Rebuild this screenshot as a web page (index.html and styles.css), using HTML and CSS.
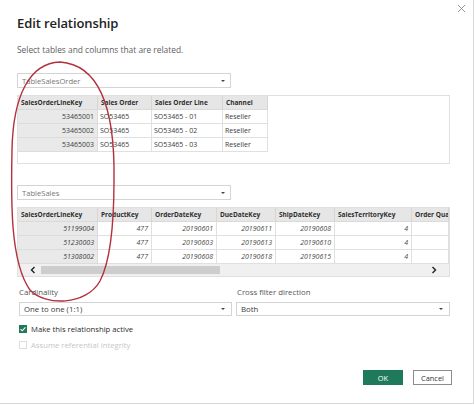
FILE: index.html
```html
<!DOCTYPE html>
<html>
<head>
<meta charset="utf-8">
<link rel="stylesheet" href="styles.css">
</head>
<body>
<div class="dialog">
  <svg class="close" width="9" height="9" viewBox="0 0 9 9"><path d="M1 1L8 8M8 1L1 8" stroke="#8a8a8a" stroke-width="0.9" fill="none"/></svg>
  <h1 class="title">Edit relationship</h1>
  <p class="subtitle">Select tables and columns that are related.</p>

  <div class="select s1"><span>TableSalesOrder</span><i class="caret"></i></div>
  <div class="tbl t1">
    <div class="grid g1">
      <div class="h">SalesOrderLineKey</div><div class="h">Sales Order</div><div class="h">Sales Order Line</div><div class="h">Channel</div>
      <div class="k">53465001</div><div class="d">SO53465</div><div class="d">SO53465 - 01</div><div class="d">Reseller</div>
      <div class="k">53465002</div><div class="d">SO53465</div><div class="d">SO53465 - 02</div><div class="d">Reseller</div>
      <div class="k">53465003</div><div class="d">SO53465</div><div class="d">SO53465 - 03</div><div class="d">Reseller</div>
    </div>
  </div>

  <div class="select s2"><span>TableSales</span><i class="caret"></i></div>
  <div class="tbl t2">
    <div class="grid g2">
      <div class="h">SalesOrderLineKey</div><div class="h">ProductKey</div><div class="h">OrderDateKey</div><div class="h">DueDateKey</div><div class="h">ShipDateKey</div><div class="h">SalesTerritoryKey</div><div class="h last">Order Qua</div>
      <div class="k i">51199004</div><div class="n">477</div><div class="n">20190601</div><div class="n">20190611</div><div class="n">20190608</div><div class="n">4</div><div class="n"></div>
      <div class="k i">51230003</div><div class="n">477</div><div class="n">20190603</div><div class="n">20190613</div><div class="n">20190610</div><div class="n">4</div><div class="n"></div>
      <div class="k i">51308002</div><div class="n">477</div><div class="n">20190608</div><div class="n">20190618</div><div class="n">20190615</div><div class="n">4</div><div class="n"></div>
      <div class="scroll">
        <svg class="chev" width="6" height="8" viewBox="0 0 6 8"><path d="M4.5 1L1.5 4L4.5 7" stroke="#222" stroke-width="1.4" fill="none"/></svg>
        <div class="thumb"></div>
        <svg class="chev right" width="6" height="8" viewBox="0 0 6 8"><path d="M1.5 1L4.5 4L1.5 7" stroke="#222" stroke-width="1.4" fill="none"/></svg>
      </div>
    </div>
  </div>

  <div class="cols">
    <div class="col">
      <div class="label">Cardinality</div>
      <div class="select s3"><span>One to one (1:1)</span><i class="caret"></i></div>
    </div>
    <div class="col">
      <div class="label">Cross filter direction</div>
      <div class="select s3"><span>Both</span><i class="caret"></i></div>
    </div>
  </div>

  <div class="check on"><span class="box"><svg width="8" height="8" viewBox="0 0 8 8"><path d="M1.6 4.2L3.2 5.8L6.4 2.3" stroke="#fff" stroke-width="1.1" fill="none"/></svg></span><span>Make this relationship active</span></div>
  <div class="check off"><span class="box"></span><span>Assume referential integrity</span></div>

  <div class="buttons">
    <div class="btn ok">OK</div>
    <div class="btn cancel">Cancel</div>
  </div>

  <svg class="annot" width="474" height="405" viewBox="0 0 474 405">
    <path d="M60 62 C30 63 13 95 12 150 C11 200 10 262 30 290 C45 306 86 306 100 281 C110 262 114 230 114 180 C115 120 104 65 60 62 Z" stroke="#b3303d" stroke-width="1.4" fill="none"/>
  </svg>
</div>
</body>
</html>
```

FILE: styles.css
```css
* { box-sizing: border-box; }
body {
  margin: 0;
  background: #fff;
  font-family: "Open Sans", "Noto Sans", sans-serif;
  color: #333;
}
.dialog {
  position: relative;
  width: 474px;
  height: 404px;
  border-right: 1px solid #d6d6d6;
  border-bottom: 1px solid #d6d6d6;
  padding: 13px 0 0 17px;
}
.close {
  position: absolute;
  top: 4px;
  left: 457px;
}
.title {
  margin: 0;
  font-size: 13px;
  font-weight: 600;
  line-height: 20px;
  height: 20px;
  color: #222;
  letter-spacing: -0.1px;
}
.subtitle {
  margin: 10px 0 0;
  font-size: 8.4px;
  line-height: 14px;
  height: 14px;
  color: #5e5e5e;
}
.select {
  width: 214px;
  height: 15px;
  border: 1px solid #d4d4d4;
  display: flex;
  align-items: center;
  justify-content: space-between;
  padding: 0 5px 0 4px;
  font-size: 7.6px;
  color: #777;
  background: #fff;
}
.s1 { margin-top: 16px; }
.s2 { margin-top: 21px; }
.s3 { width: auto; height: 14px; margin-top: 3px; color: #3a3a3a; font-size: 7.8px; padding-right: 6px; }
.caret {
  width: 0;
  height: 0;
  border-left: 2px solid transparent;
  border-right: 2px solid transparent;
  border-top: 2px solid #444;
}
.tbl {
  width: 433px;
  border: 1px solid #e0e0e0;
  overflow: hidden;
  margin-top: 7px;
}
.t1 { height: 69px; }
.t2 { height: 70px; }
.grid {
  display: grid;
  grid-auto-rows: 14px;
  font-size: 7px;
  line-height: 13px;
}
.g1 { grid-template-columns: 80px 54px 71px 45px; width: 250px; }
.g2 { grid-template-columns: 80px 54px 65px 59px 59px 77px 37px; width: 431px; }
.grid > div { white-space: nowrap; overflow: hidden; }
.h {
  background: #e6e6e6;
  font-weight: 700;
  font-size: 6.5px;
  color: #2e2e2e;
  padding: 0 3px;
  border-right: 1px solid #d6d6d6;
  border-bottom: 1px solid #dadada;
}
.h.last { padding-right: 0; }
.k {
  background: #e9e9e9;
  text-align: right;
  padding: 0 3px;
  color: #3c3c3c;
  border-bottom: 1px solid #dcdcdc;
  border-right: 1px solid #dcdcdc;
}
.d {
  padding: 0 2px;
  color: #3c3c3c;
  border-bottom: 1px solid #e0e0e0;
  border-right: 1px solid #e0e0e0;
}
.n {
  font-style: italic;
  text-align: right;
  padding: 0 3px;
  color: #4a4a4a;
  border-bottom: 1px solid #e0e0e0;
  border-right: 1px solid #e0e0e0;
}
.i { font-style: italic; }
.g2 .scroll {
  grid-column: 1 / -1;
  height: 12px;
  background: #f0f0f0;
  display: flex;
  align-items: center;
  padding-left: 12px;
  overflow: visible;
}
.chev { flex: none; }
.thumb {
  width: 179px;
  height: 8px;
  background: #cdcdcd;
  margin-left: 5px;
}
.chev.right { margin-left: auto; margin-right: 12px; }
.cols {
  display: grid;
  grid-template-columns: 213px 214px;
  column-gap: 4px;
  margin: 8px 0 0 2px;
}
.col:last-child .label { padding-left: 1px; }
.label {
  font-size: 7.8px;
  line-height: 14px;
  height: 14px;
  color: #555;
}
.check {
  display: flex;
  align-items: center;
  height: 14px;
  font-size: 7.7px;
  padding-left: 2px;
  gap: 4px;
}
.check.on { margin-top: 6px; color: #2a2a2a; }
.check.off { margin-top: 2px; color: #c6c6c6; }
.box {
  width: 8px;
  height: 8px;
  display: flex;
}
.on .box { background: #1f7a5a; }
.off .box { border: 1px solid #dedede; }
.buttons {
  display: flex;
  justify-content: flex-end;
  gap: 10px;
  width: 435px;
  margin-top: 18px;
}
.btn {
  height: 15px;
  display: flex;
  align-items: center;
  justify-content: center;
  font-size: 7.4px;
}
.ok { width: 40px; background: #1f7a5c; color: #fff; }
.cancel { width: 39px; border: 1px solid #8c8c8c; color: #333; background: #fff; }
.annot {
  position: absolute;
  left: 0;
  top: 0;
  pointer-events: none;
}
```
